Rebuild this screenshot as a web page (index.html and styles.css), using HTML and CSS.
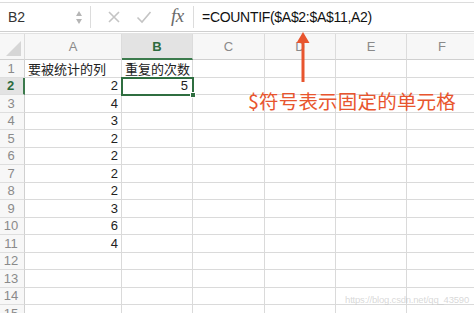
FILE: index.html
```html
<!DOCTYPE html>
<html lang="zh">
<head>
<meta charset="utf-8">
<link rel="stylesheet" href="styles.css">
</head>
<body>
<div class="app">
  <div class="fbar">
    <div class="namebox">
      <span class="ref">B2</span>
      <span class="spin"><span class="up"></span><span class="down"></span></span>
    </div>
    <div class="sep"></div>
    <div class="tools">
      <svg class="ico" width="14" height="14" viewBox="0 0 14 14"><path d="M2 2L12 12M12 2L2 12" stroke="#c4c4c4" stroke-width="1.6" fill="none"/></svg>
      <svg class="ico" width="16" height="14" viewBox="0 0 16 14"><path d="M1.5 7.5L6 12L14.5 2" stroke="#c4c4c4" stroke-width="1.6" fill="none"/></svg>
      <span class="fx">fx</span>
    </div>
    <div class="sep"></div>
    <div class="formula">=COUNTIF($A$2:$A$11,A2)</div>
  </div>
  <div class="grid">
    <div class="ch corner"><span class="tri"></span></div>
    <div class="ch">A</div>
    <div class="ch sel">B</div>
    <div class="ch">C</div>
    <div class="ch">D</div>
    <div class="ch">E</div>
    <div class="ch">F</div>

    <div class="rh">1</div><div class="c">要被统计的列</div><div class="c">重复的次数</div><div class="c"></div><div class="c"></div><div class="c"></div><div class="c"></div>
    <div class="rh sel">2</div><div class="c n">2</div><div class="c n active">5<span class="handle"></span></div><div class="c"></div><div class="c"></div><div class="c"></div><div class="c"></div>
    <div class="rh">3</div><div class="c n">4</div><div class="c"></div><div class="c"></div><div class="c"></div><div class="c"></div><div class="c"></div>
    <div class="rh">4</div><div class="c n">3</div><div class="c"></div><div class="c"></div><div class="c"></div><div class="c"></div><div class="c"></div>
    <div class="rh">5</div><div class="c n">2</div><div class="c"></div><div class="c"></div><div class="c"></div><div class="c"></div><div class="c"></div>
    <div class="rh">6</div><div class="c n">2</div><div class="c"></div><div class="c"></div><div class="c"></div><div class="c"></div><div class="c"></div>
    <div class="rh">7</div><div class="c n">2</div><div class="c"></div><div class="c"></div><div class="c"></div><div class="c"></div><div class="c"></div>
    <div class="rh">8</div><div class="c n">2</div><div class="c"></div><div class="c"></div><div class="c"></div><div class="c"></div><div class="c"></div>
    <div class="rh">9</div><div class="c n">3</div><div class="c"></div><div class="c"></div><div class="c"></div><div class="c"></div><div class="c"></div>
    <div class="rh">10</div><div class="c n">6</div><div class="c"></div><div class="c"></div><div class="c"></div><div class="c"></div><div class="c"></div>
    <div class="rh">11</div><div class="c n">4</div><div class="c"></div><div class="c"></div><div class="c"></div><div class="c"></div><div class="c"></div>
    <div class="rh">12</div><div class="c"></div><div class="c"></div><div class="c"></div><div class="c"></div><div class="c"></div><div class="c"></div>
    <div class="rh">13</div><div class="c"></div><div class="c"></div><div class="c"></div><div class="c"></div><div class="c"></div><div class="c"></div>
    <div class="rh">14</div><div class="c"></div><div class="c"></div><div class="c"></div><div class="c"></div><div class="c"></div><div class="c"></div>
    <div class="rh">15</div><div class="c"></div><div class="c"></div><div class="c"></div><div class="c"></div><div class="c"></div><div class="c"></div>
  </div>

  <svg class="arrow" width="16" height="52" viewBox="0 0 16 52">
    <path d="M8 0L14.5 11H9.5V50H6.5V11H1.5Z" fill="#e8552e"/>
  </svg>
  <div class="note">$符号表示固定的单元格</div>
  <div class="wm">https://blog.csdn.net/qq_43590</div>
</div>
</body>
</html>
```

FILE: styles.css
```css
* { box-sizing: border-box; }
html, body { margin: 0; padding: 0; background: #fff; }
body {
  font-family: "Liberation Sans", "Noto Sans CJK SC", sans-serif;
  color: #222;
  width: 474px;
  height: 313px;
  overflow: hidden;
}
.app { position: relative; width: 474px; height: 313px; overflow: hidden; }

.fbar {
  margin-top: 2px;
  height: 30px;
  border-top: 1px solid #dcdcdc;
  border-bottom: 1px solid #cfcfcf;
  display: flex;
  align-items: center;
}
.namebox {
  width: 90px;
  display: flex;
  align-items: center;
  padding-left: 8px;
}
.ref { font-size: 14px; color: #333; flex: 1; }
.spin {
  display: flex;
  flex-direction: column;
  gap: 3px;
  margin-right: 8px;
}
.up, .down {
  width: 0; height: 0;
  border-left: 3.5px solid transparent;
  border-right: 3.5px solid transparent;
}
.up { border-bottom: 5px solid #b5b5b5; }
.down { border-top: 5px solid #b5b5b5; }
.sep { width: 1px; height: 22px; background: #dcdcdc; }
.tools {
  width: 102px;
  display: flex;
  align-items: center;
  padding-left: 16px;
}
.tools .ico:first-child { margin-right: 15px; }
.tools .ico:nth-child(2) { margin-right: 19px; }
.fx {
  font-family: "Liberation Serif", serif;
  font-style: italic;
  font-size: 19px;
  color: #6a6a6a;
  letter-spacing: -0.5px;
  margin-top: -3px;
}
.formula {
  padding-left: 8px;
  font-size: 14px;
  letter-spacing: -0.3px;
  color: #111;
}

.grid {
  margin-top: 1px;
  display: grid;
  grid-template-columns: 25px 97px 71px 72px 71px 71px 71px;
  grid-template-rows: 26px;
  grid-auto-rows: 17.5px;
  border-top: 1px solid #e2e2e2;
}
.ch {
  background: #f7f7f7;
  border-right: 1px solid #dcdcdc;
  border-bottom: 1px solid #d0d0d0;
  color: #8a8a8a;
  font-size: 13px;
  display: flex;
  align-items: center;
  justify-content: center;
}
.ch.sel {
  background: #e3e3e3;
  color: #2d6b3e;
  font-weight: bold;
  border-bottom: 2px solid #3b7a4c;
}
.corner { position: relative; }
.tri {
  position: absolute;
  right: 3px;
  bottom: 3px;
  width: 0; height: 0;
  border-left: 15px solid transparent;
  border-bottom: 15px solid #d6d6d6;
}
.rh {
  background: #f7f7f7;
  border-right: 1px solid #d0d0d0;
  border-bottom: 1px solid #dedede;
  color: #8a8a8a;
  font-size: 13px;
  display: flex;
  align-items: center;
  justify-content: center;
  padding-right: 2px;
}
.rh.sel {
  background: #e3e3e3;
  color: #2d6b3e;
  font-weight: bold;
  border-right: 2px solid #3b7a4c;
}
.c {
  border-right: 1px solid #dadada;
  border-bottom: 1px solid #dadada;
  font-size: 13px;
  color: #222;
  display: flex;
  align-items: center;
  padding: 0 3px;
  white-space: nowrap;
}
.c.n { justify-content: flex-end; }
.c.active {
  position: relative;
  outline: 2px solid #2f6e40;
  outline-offset: -1px;
  padding-right: 4px;
}
.handle {
  position: absolute;
  right: -4px;
  bottom: -4px;
  width: 6px;
  height: 6px;
  background: #2f6e40;
  border: 1px solid #fff;
}

.arrow { position: absolute; left: 295px; top: 32px; }
.note {
  position: absolute;
  left: 248px;
  top: 89px;
  font-family: "Noto Sans CJK SC", sans-serif;
  font-size: 19.5px;
  line-height: 24px;
  color: #e8552e;
  letter-spacing: 0.2px;
}
.wm {
  position: absolute;
  right: 5px;
  top: 294px;
  font-size: 9.5px;
  letter-spacing: -0.2px;
  color: rgba(190, 190, 190, 0.6);
  white-space: nowrap;
}
```
